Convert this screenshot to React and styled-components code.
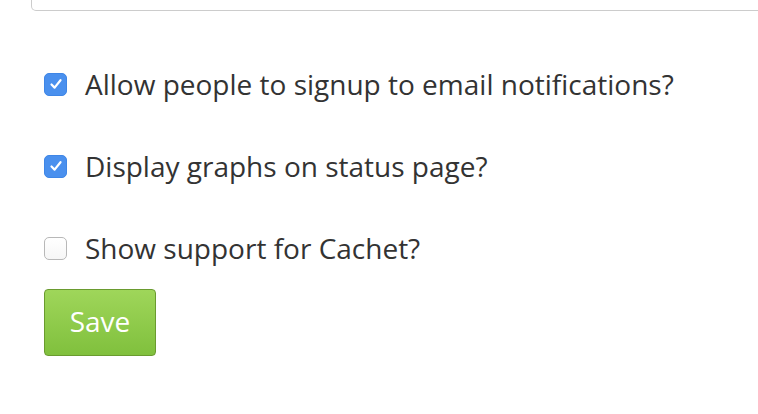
import React from "react";
import styled, { createGlobalStyle } from "styled-components";

const Global = createGlobalStyle`
  html, body {
    margin: 0;
    background: #fff;
    font-family: "Open Sans", "Liberation Sans", sans-serif;
    color: #333;
  }
`;

const Page = styled.div`
  width: 758px;
  height: 414px;
  overflow: hidden;
`;

const PrevField = styled.div`
  height: 10px;
  margin-left: 31px;
  margin-right: -10px;
  border: 1px solid #cccccc;
  border-top: none;
  border-radius: 0 0 5px 5px;
`;

const Form = styled.form`
  display: flex;
  flex-direction: column;
  align-items: flex-start;
  gap: 42px;
  margin-top: 53px;
  padding-left: 44px;
`;

const Row = styled.label`
  display: flex;
  align-items: center;
  gap: 18px;
  height: 40px;
  font-size: 28px;
  line-height: 40px;
  color: #333;
`;

const Box = styled.span`
  display: flex;
  align-items: center;
  justify-content: center;
  width: 23px;
  height: 23px;
  box-sizing: border-box;
  border-radius: 5px;
  background: ${(p) => (p.checked ? "#4a90ee" : "linear-gradient(#ffffff, #f6f6f6)")};
  border: 1px solid ${(p) => (p.checked ? "#3f86e6" : "#b8b8b8")};
`;

const SaveButton = styled.button`
  margin-top: -21px;
  width: 112px;
  height: 67px;
  box-sizing: border-box;
  border: 1px solid #6a9b2f;
  border-radius: 4px;
  background: linear-gradient(#9fd65a, #80c03d);
  color: #fff;
  font-family: "Open Sans", "Liberation Sans", sans-serif;
  font-size: 28px;
  padding: 0 0 3px;
`;

const Check = () => (
  <svg width="14" height="14" viewBox="0 0 14 14">
    <path d="M2.5 7.5 L5.6 10.6 L11.5 3.2" fill="none" stroke="#fff" strokeWidth="2.2" strokeLinecap="round" strokeLinejoin="round" />
  </svg>
);

const options = [
  { label: "Allow people to signup to email notifications?", checked: true },
  { label: "Display graphs on status page?", checked: true },
  { label: "Show support for Cachet?", checked: false },
];

export default function App() {
  return (
    <Page>
      <Global />
      <PrevField />
      <Form onSubmit={(e) => e.preventDefault()}>
        {options.map((o) => (
          <Row key={o.label}>
            <Box checked={o.checked}>{o.checked && <Check />}</Box>
            {o.label}
          </Row>
        ))}
        <SaveButton type="submit">Save</SaveButton>
      </Form>
    </Page>
  );
}
